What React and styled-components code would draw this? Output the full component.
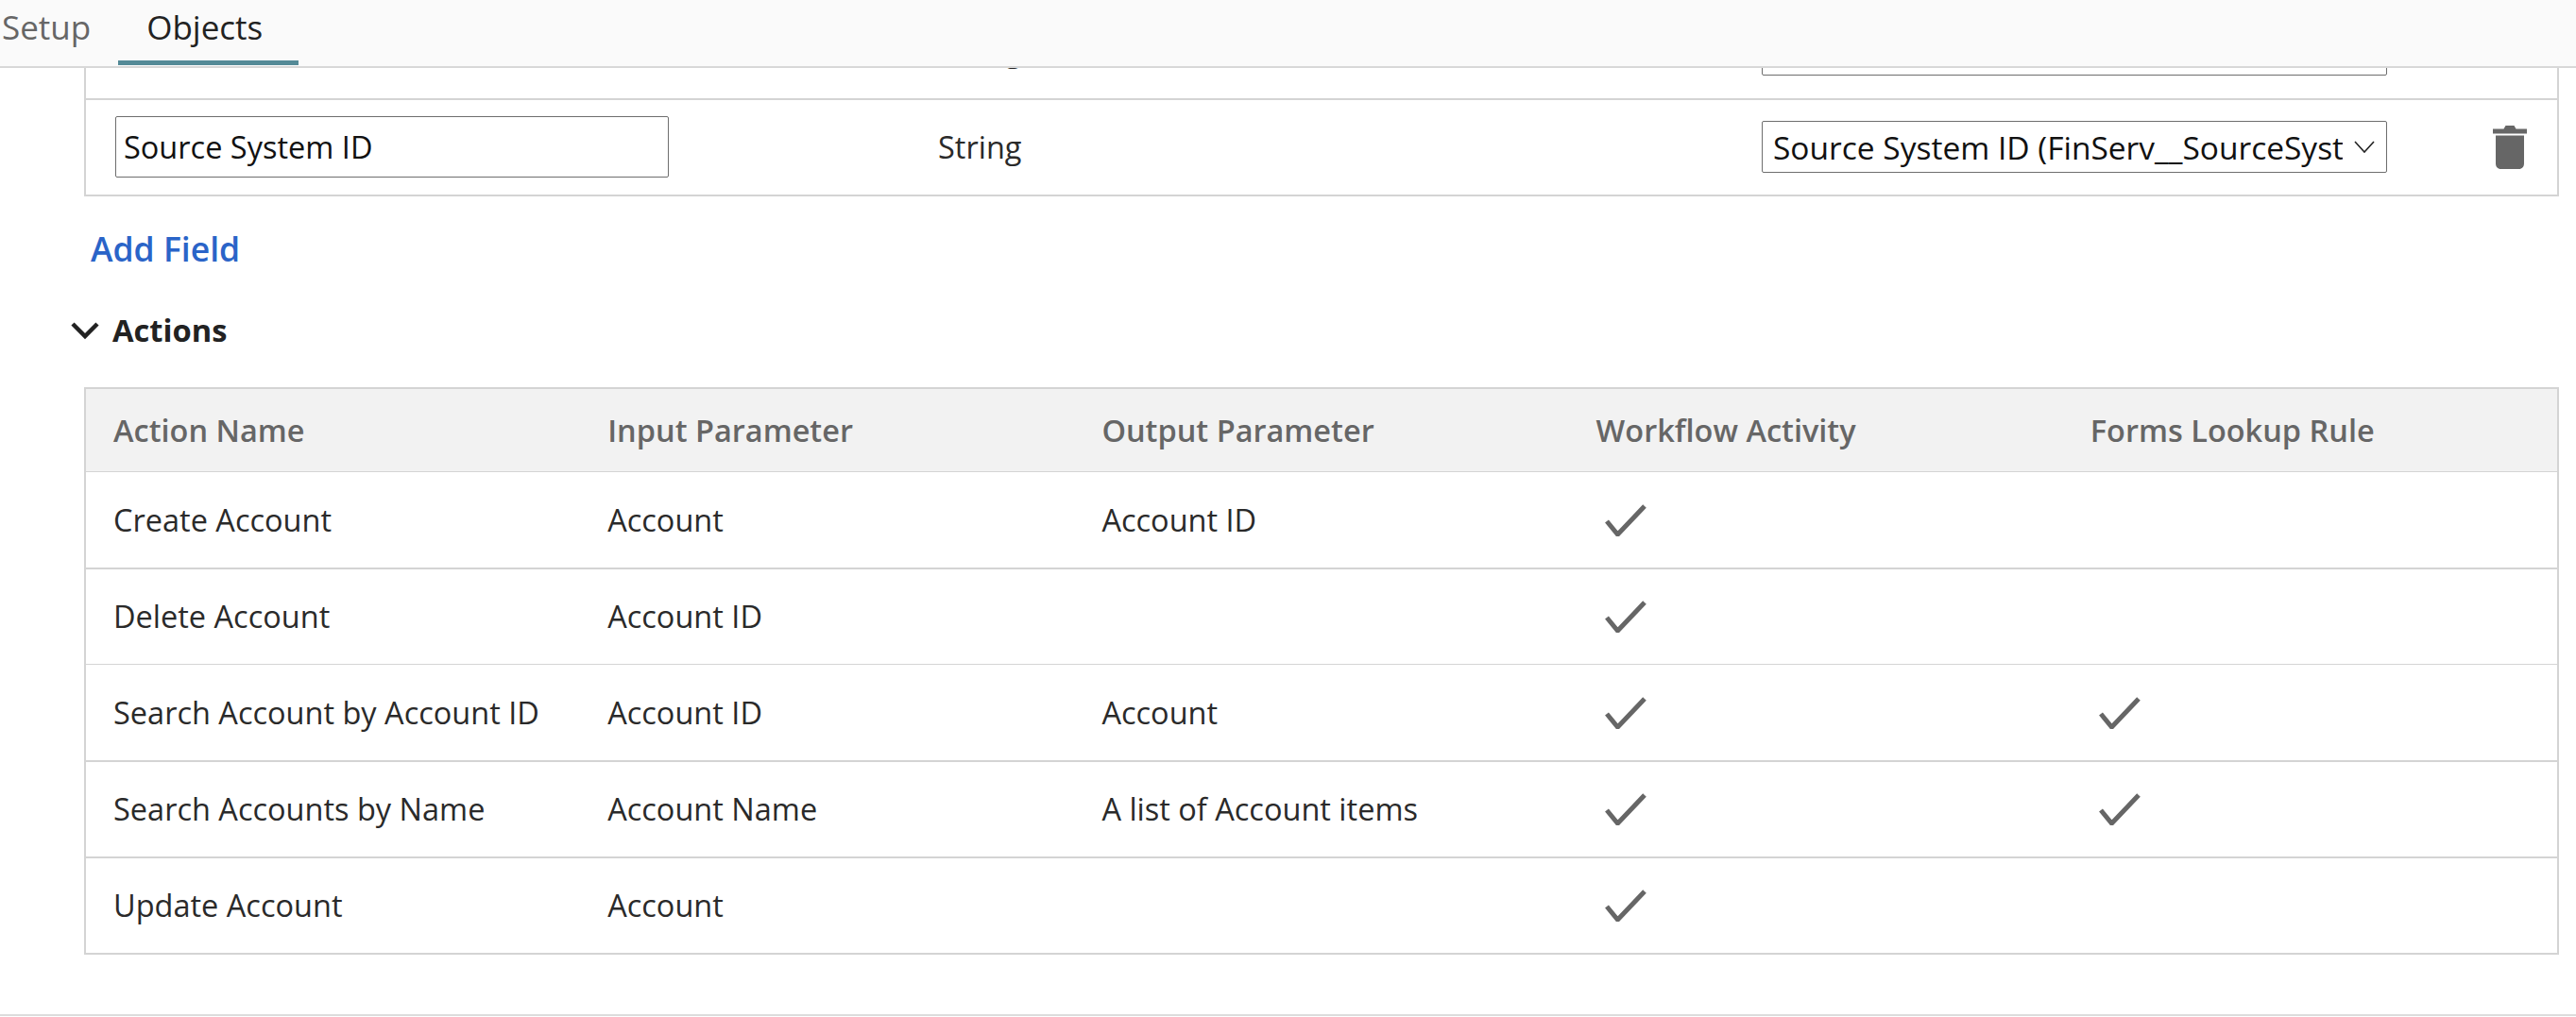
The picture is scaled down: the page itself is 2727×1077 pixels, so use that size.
import React from "react";
import styled, { createGlobalStyle } from "styled-components";

const GlobalStyle = createGlobalStyle`
  html, body {
    margin: 0;
    padding: 0;
    background: #fff;
  }
  body {
    font-family: "Open Sans", "Liberation Sans", sans-serif;
    color: #2a2a2a;
  }
`;

const Page = styled.div`
  position: relative;
  height: 1077px;
  overflow: hidden;
`;

const TopBar = styled.div`
  position: absolute;
  top: 0;
  left: 0;
  right: 0;
  z-index: 2;
  height: 70px;
  display: flex;
  background: #fafafa;
  border-bottom: 2px solid #d8d8d8;
`;

const Tab = styled.div`
  box-sizing: border-box;
  height: 69px;
  margin-left: ${(p) => p.$offset || 0}px;
  padding: 7px ${(p) => (p.$active ? 38 : 32)}px 0 ${(p) => (p.$active ? 30 : 32)}px;
  font-size: 35px;
  line-height: 44px;
  color: ${(p) => (p.$active ? "#222" : "#666")};
  border-bottom: 5px solid ${(p) => (p.$active ? "#548a97" : "transparent")};
`;

const Content = styled.div`
  padding: 2px 18px 0 89px;
`;

const FieldTable = styled.div`
  border: solid #d4d4d4;
  border-width: 0 2px 0 2px;
`;

const FieldRow = styled.div`
  display: grid;
  grid-template-columns: 871px 872px 774px 1fr;
  align-items: center;
  box-sizing: border-box;
  height: ${(p) => p.$height}px;
  padding: 0 0 1px 31px;
  font-size: 32.5px;
  border-bottom: 2px solid #d4d4d4;
`;

const NameInput = styled.input`
  box-sizing: border-box;
  width: 586px;
  height: 65px;
  padding: 0 8px;
  font: inherit;
  color: #111;
  background: #fff;
  border: 1px solid #6e6e6e;
  border-radius: 2px;
  outline: none;
`;

const SelectWrap = styled.div`
  position: relative;
  width: 662px;
  height: 55px;
`;

const FieldSelect = styled.select`
  appearance: none;
  box-sizing: border-box;
  width: 100%;
  height: 100%;
  padding: 0 46px 0 11px;
  font: inherit;
  font-size: 33.5px;
  color: #111;
  background: #fff;
  border: 1px solid #6e6e6e;
  border-radius: 2px;
`;

const SelectArrow = styled.svg`
  position: absolute;
  top: 21px;
  right: 13px;
  width: 22px;
  height: 13px;
`;

const TrashIcon = styled.svg`
  display: block;
  width: 36px;
  height: 46px;
`;

const AddField = styled.a`
  display: block;
  margin: 33px 0 0 7px;
  font-size: 35.5px;
  font-weight: 600;
  line-height: 44px;
  color: #2a64c8;
`;

const SectionHeading = styled.div`
  display: flex;
  align-items: center;
  gap: 14px;
  margin: 43px 0 38px -14px;
  font-size: 32.7px;
  font-weight: 700;
  line-height: 44px;
  color: #222;
`;

const Chevron = styled.svg`
  width: 30px;
  height: 20px;
`;

const ActionTable = styled.div`
  border: 2px solid #d4d4d4;
`;

const Row = styled.div`
  display: grid;
  grid-template-columns: repeat(5, 1fr);
  align-items: center;
  box-sizing: border-box;
  height: ${(p) => p.$height}px;
  background: ${(p) => (p.$head ? "#f2f2f2" : "#fff")};
  border-bottom: ${(p) => (p.$last ? "none" : `${p.$line || 2}px solid #d4d4d4`)};
`;

const Cell = styled.div`
  padding-left: 29px;
  font-size: 32.5px;
  line-height: 44px;
  white-space: nowrap;
`;

const HeadCell = styled(Cell)`
  font-weight: 600;
  color: #666;
`;

const Check = styled.svg`
  display: block;
  width: 46px;
  height: 34px;
  margin: 0 0 0 8px;
`;

const Footer = styled.div`
  margin: 63px -18px 0 -89px;
  border-bottom: 2px solid #dcdcdc;
`;

const headers = [
  "Action Name",
  "Input Parameter",
  "Output Parameter",
  "Workflow Activity",
  "Forms Lookup Rule",
];

const actions = [
  { name: "Create Account", input: "Account", output: "Account ID", workflow: true, height: 103, line: 2 },
  { name: "Delete Account", input: "Account ID", output: "", workflow: true, height: 101, line: 1 },
  { name: "Search Account by Account ID", input: "Account ID", output: "Account", workflow: true, forms: true, height: 103, line: 2 },
  { name: "Search Accounts by Name", input: "Account Name", output: "A list of Account items", workflow: true, forms: true, height: 102, line: 2 },
  { name: "Update Account", input: "Account", output: "", workflow: true, height: 100, last: true },
];

const CheckMark = () => (
  <Check viewBox="0 0 46 34">
    <path d="M3 18 L14.5 32 L43 2" fill="none" stroke="#666" strokeWidth="5" />
  </Check>
);

const Trash = () => (
  <TrashIcon viewBox="0 0 36 46">
    <path
      fill="#666"
      d="M0 3.5h11.5L13.5 0h9l2 3.5H36v5H0zM3 10.5h30V40c0 3.5-2 6-5.5 6h-19C5 46 3 43.5 3 40z"
    />
  </TrashIcon>
);

const FieldSelectBox = ({ label }) => (
  <SelectWrap>
    <FieldSelect defaultValue="field">
      <option value="field">{label}</option>
    </FieldSelect>
    <SelectArrow viewBox="0 0 22 13">
      <path d="M1 1 L11 12 L21 1" fill="none" stroke="#222" strokeWidth="1.6" />
    </SelectArrow>
  </SelectWrap>
);

export default function App() {
  return (
    <Page>
      <GlobalStyle />
      <TopBar>
        <Tab $offset={-30}>Setup</Tab>
        <Tab $active $offset={-3}>Objects</Tab>
      </TopBar>
      <Content>
        <FieldTable>
          <FieldRow $height={104}>
            <span />
            <span>String</span>
            <FieldSelectBox label="Name (Name)" />
          </FieldRow>
          <FieldRow $height={102}>
            <NameInput defaultValue="Source System ID" />
            <span>String</span>
            <FieldSelectBox label="Source System ID (FinServ__SourceSystemId__c)" />
            <Trash />
          </FieldRow>
        </FieldTable>
        <AddField>Add Field</AddField>
        <SectionHeading>
          <Chevron viewBox="0 0 30 20">
            <path d="M2 3 L15 16 L28 3" fill="none" stroke="#222" strokeWidth="4.5" />
          </Chevron>
          Actions
        </SectionHeading>
        <ActionTable>
          <Row $head $height={88} $line={1}>
            {headers.map((h) => (
              <HeadCell key={h}>{h}</HeadCell>
            ))}
          </Row>
          {actions.map((a) => (
            <Row key={a.name} $height={a.height} $line={a.line} $last={a.last}>
              <Cell>{a.name}</Cell>
              <Cell>{a.input}</Cell>
              <Cell>{a.output}</Cell>
              <Cell>{a.workflow && <CheckMark />}</Cell>
              <Cell>{a.forms && <CheckMark />}</Cell>
            </Row>
          ))}
        </ActionTable>
        <Footer />
      </Content>
    </Page>
  );
}
